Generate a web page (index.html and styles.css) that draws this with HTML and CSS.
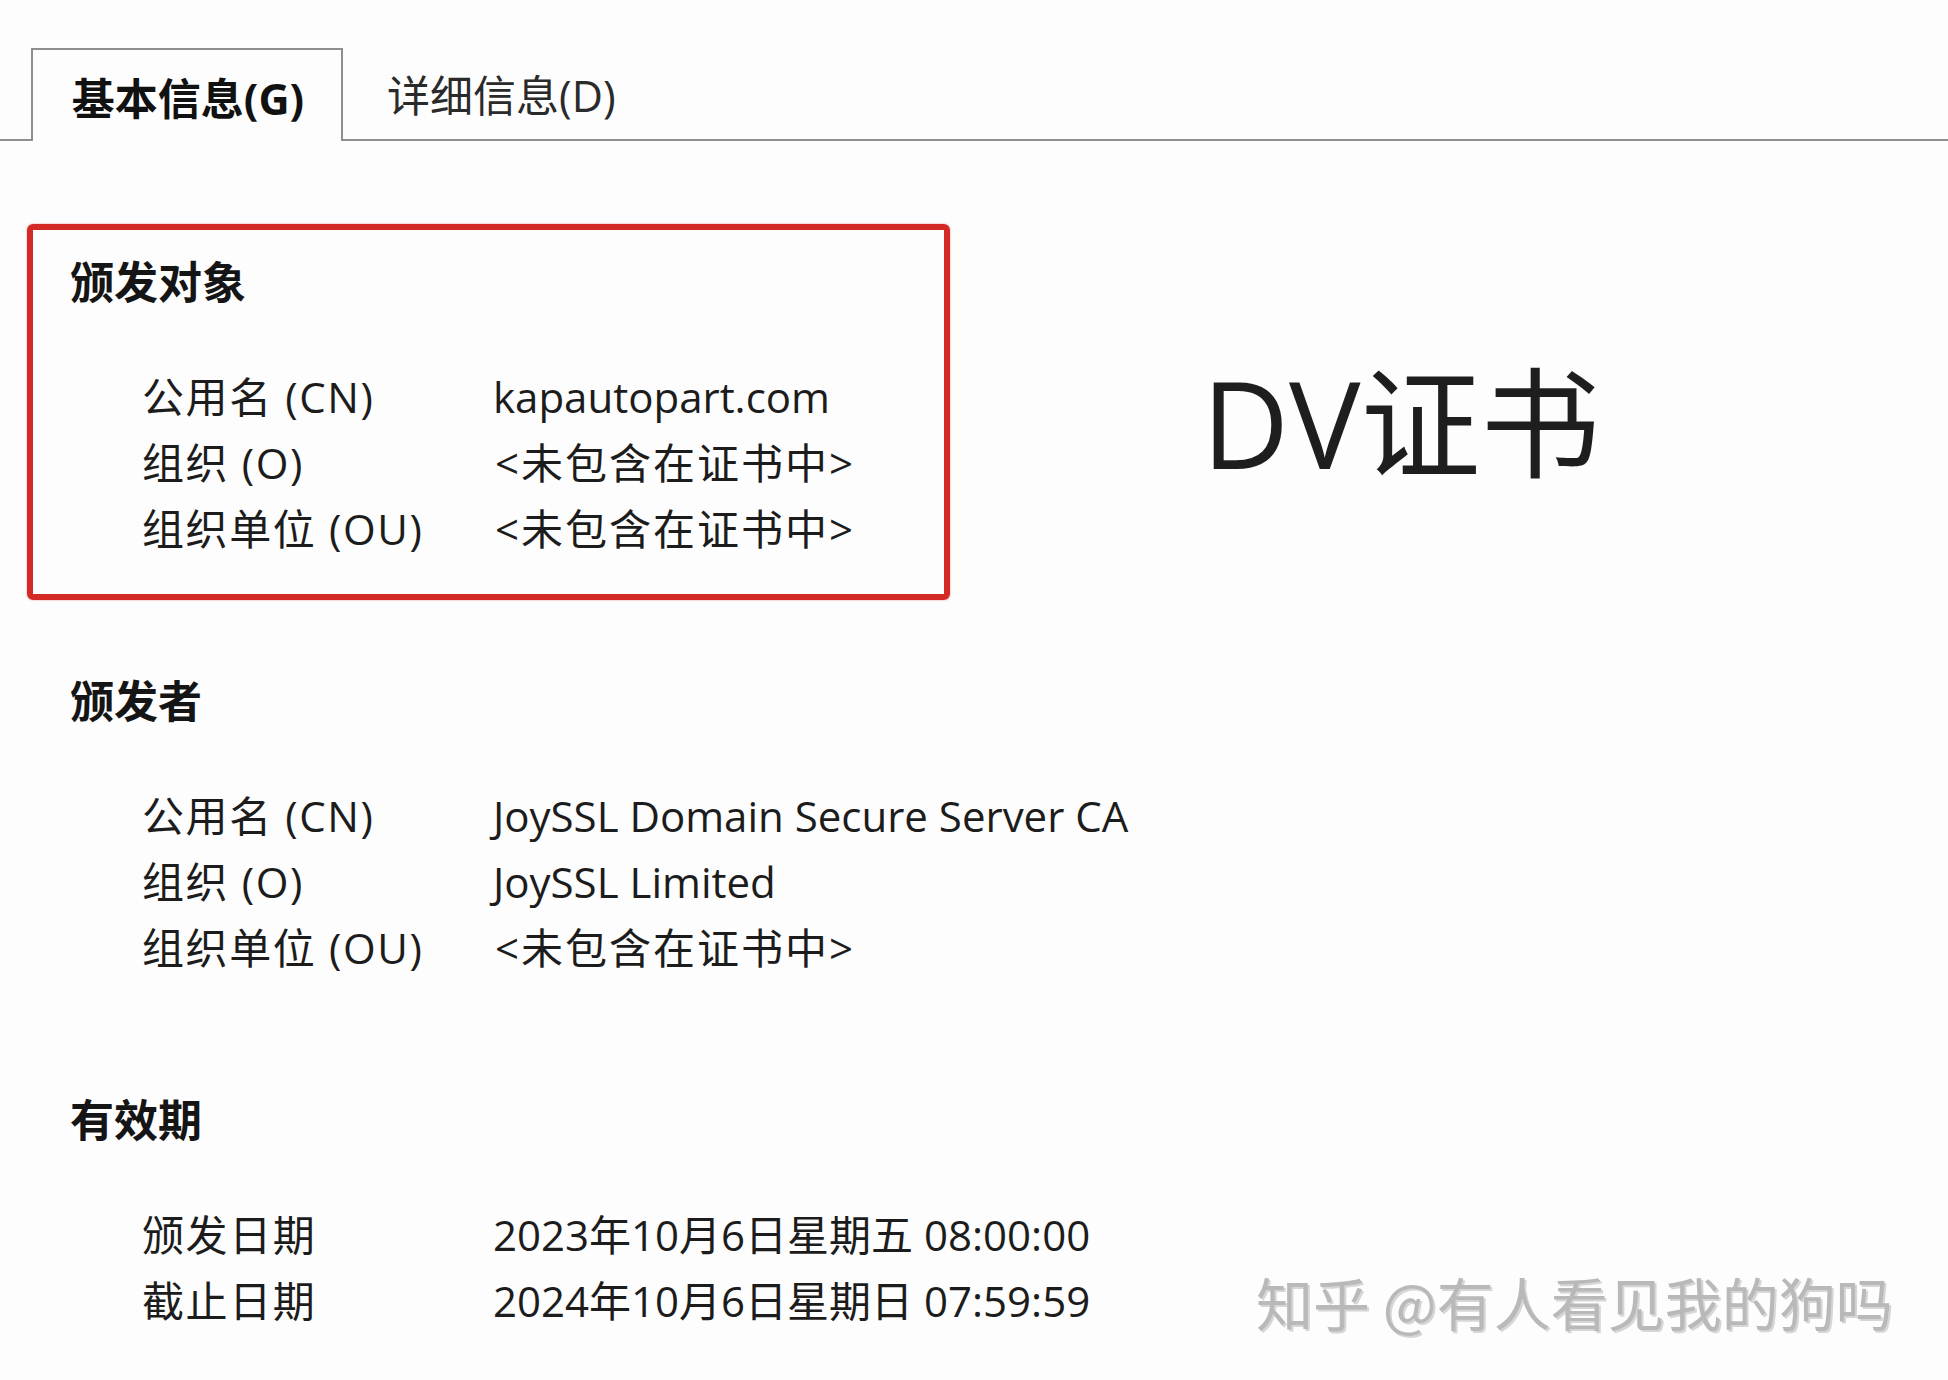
FILE: index.html
```html
<!DOCTYPE html>
<html lang="zh-CN">
<head>
<meta charset="utf-8">
<title>证书信息</title>
<link rel="stylesheet" href="styles.css">
</head>
<body>
<div class="page">
  <div class="tabs">
    <div class="tab active">基本信息(G)</div>
    <div class="tab">详细信息(D)</div>
  </div>

  <div class="top-row">
    <section class="section highlighted">
      <h2 class="heading">颁发对象</h2>
      <div class="rows">
        <div class="row"><span class="label">公用名 (CN)</span><span class="value">kapautopart.com</span></div>
        <div class="row"><span class="label">组织 (O)</span><span class="value missing">&lt;未包含在证书中&gt;</span></div>
        <div class="row"><span class="label">组织单位 (OU)</span><span class="value missing">&lt;未包含在证书中&gt;</span></div>
      </div>
    </section>
    <div class="dv">DV证书</div>
  </div>

  <section class="section">
    <h2 class="heading">颁发者</h2>
    <div class="rows">
      <div class="row"><span class="label">公用名 (CN)</span><span class="value">JoySSL Domain Secure Server CA</span></div>
      <div class="row"><span class="label">组织 (O)</span><span class="value">JoySSL Limited</span></div>
      <div class="row"><span class="label">组织单位 (OU)</span><span class="value missing">&lt;未包含在证书中&gt;</span></div>
    </div>
  </section>

  <section class="section">
    <h2 class="heading">有效期</h2>
    <div class="rows">
      <div class="row"><span class="label">颁发日期</span><span class="value">2023年10月6日星期五 08:00:00</span></div>
      <div class="row"><span class="label">截止日期</span><span class="value">2024年10月6日星期日 07:59:59</span></div>
    </div>
  </section>

  <div class="watermark">知乎 @有人看见我的狗吗</div>
</div>
</body>
</html>
```

FILE: styles.css
```css
html, body {
  margin: 0;
  padding: 0;
  background: #fdfdfd;
}

body {
  font-family: "Open Sans", "Noto Sans CJK SC", sans-serif;
  color: #1c1c1c;
  width: 1948px;
  height: 1380px;
  overflow: hidden;
}

.page {
  position: relative;
  width: 1948px;
  height: 1380px;
}

.tabs {
  display: flex;
  padding-top: 48px;
  padding-left: 31px;
  border-bottom: 2px solid #8e8e8e;
}

.tab {
  height: 91px;
  display: flex;
  align-items: center;
  font-size: 43px;
  line-height: 1;
  color: #222;
  box-sizing: border-box;
}

.tab.active {
  width: 312px;
  justify-content: center;
  padding-top: 6px;
  padding-left: 2px;
  font-weight: 700;
  color: #111;
  border: 2px solid #8e8e8e;
  border-bottom: none;
  background: #fdfdfd;
  margin-bottom: -2px;
  height: 93px;
}

.tab:not(.active) {
  padding-left: 44px;
  padding-top: 4px;
  font-weight: 400;
  color: #2a2a2a;
}

.top-row {
  display: flex;
  align-items: center;
  margin-top: 83px;
}

.section {
  margin-left: 27px;
  width: 923px;
  box-sizing: border-box;
  border: 6px solid transparent;
  border-radius: 6px;
  padding: 19px 0 32px 37px;
}

.section + .section,
.top-row + .section {
  margin-top: 43px;
}

.section.highlighted {
  border-color: #d42a26;
  box-shadow: 0 0 2px rgba(212, 42, 38, 0.5);
}

.heading {
  margin: 0;
  font-size: 44px;
  line-height: 66px;
  font-weight: 700;
  color: #151515;
}

.rows {
  margin-top: 49px;
  padding-left: 72px;
}

.row {
  display: flex;
  font-size: 42px;
  line-height: 66px;
  white-space: nowrap;
}

.label {
  width: 351px;
  flex: none;
  letter-spacing: 1.6px;
}

.value {
  flex: none;
}

.value.missing {
  letter-spacing: 2px;
  padding-left: 2px;
}

.dv {
  margin-left: 252px;
  padding-top: 22px;
  font-size: 120px;
  line-height: 1;
  font-weight: 400;
  color: #1e1e1e;
  white-space: nowrap;
}

.watermark {
  position: absolute;
  left: 1256px;
  top: 1266px;
  font-family: "Noto Sans CJK SC", sans-serif;
  font-size: 57px;
  line-height: 70px;
  color: #b9b9b9;
  text-shadow: 2px 2px 0 #d6d6d6;
  white-space: nowrap;
}
```
